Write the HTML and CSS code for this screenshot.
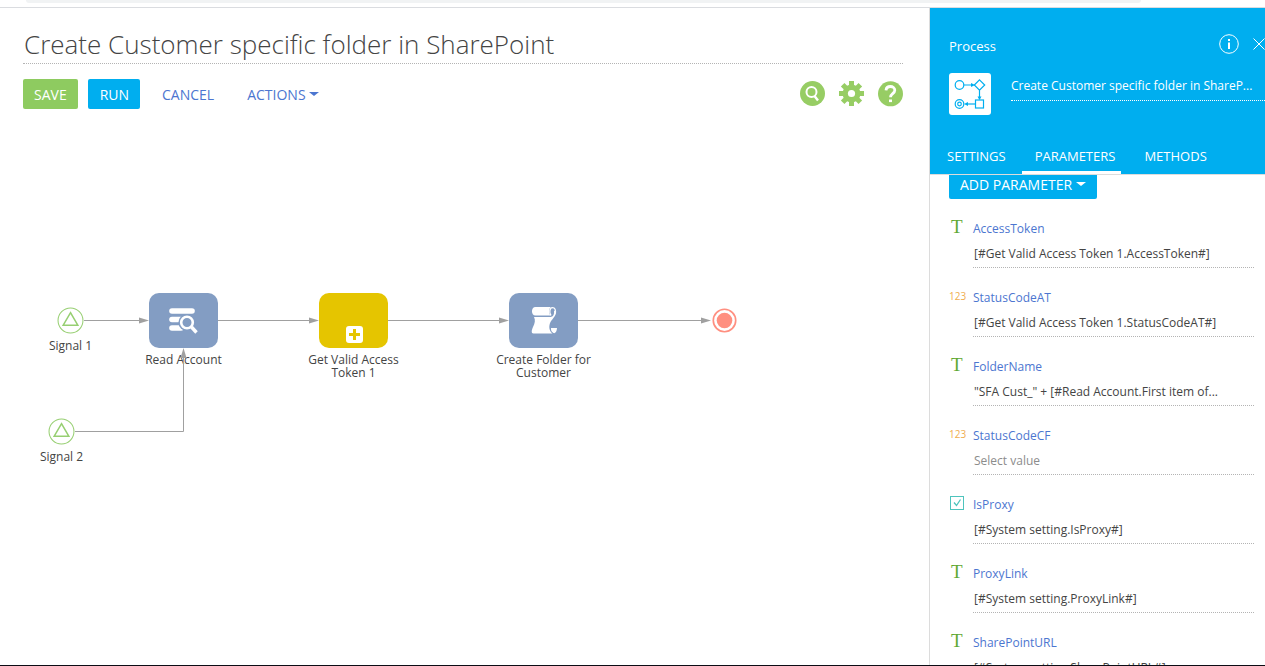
FILE: index.html
```html
<!DOCTYPE html>
<html lang="en">

<head>
    <meta charset="utf-8">
    <title>Process Designer</title>
    <link rel="stylesheet" href="styles.css">
</head>

<body>
    <div class="topbar">
        <div class="topbar-pill"></div>
    </div>
    <div class="page">
        <main class="designer">
            <header class="designer-header">
                <input class="title" type="text" aria-label="Process title" value="Create Customer specific folder in SharePoint">
                <div class="toolbar">
                    <button class="btn save">SAVE</button>
                    <button class="btn run">RUN</button>
                    <button class="btn flat">CANCEL</button>
                    <button class="btn flat actions">ACTIONS <span class="caret"></span></button>
                    <div class="tools">
                        <button class="icon-btn" aria-label="Search">
                            <svg width="26" height="26" viewBox="0 0 26 26">
                                <circle cx="13.5" cy="12.5" r="12.5" fill="#97cd64" />
                                <circle cx="12.5" cy="11" r="5" fill="none" stroke="#fff" stroke-width="2" />
                                <path d="M15.5 15L19 19.5" stroke="#fff" stroke-width="2.4" />
                            </svg>
                        </button>
                        <button class="icon-btn" aria-label="Settings">
                            <svg width="26" height="26" viewBox="-13.5 -12.5 26 26">
                                <g fill="#97cd64">
                                    <circle r="9" />
                                    <rect x="-2.5" y="-12.5" width="5" height="25" />
                                    <rect x="-12.5" y="-2.5" width="25" height="5" />
                                    <rect x="-2.5" y="-12.5" width="5" height="25" transform="rotate(45)" />
                                    <rect x="-2.5" y="-12.5" width="5" height="25" transform="rotate(-45)" />
                                </g>
                                <circle r="3.6" fill="#fff" />
                            </svg>
                        </button>
                        <button class="icon-btn" aria-label="Help">
                            <svg width="26" height="26" viewBox="0 0 26 26">
                                <circle cx="13.5" cy="12.8" r="12.5" fill="#97cd64" />
                                <path d="M9 9.3C9.2 6.7 11 5.5 13.4 5.5s4.4 1.4 4.4 3.7c0 3.3-4.3 3.5-4.3 7" fill="none" stroke="#fff" stroke-width="2.8" />
                                <rect x="12" y="18.5" width="3" height="2.6" fill="#fff" />
                            </svg>
                        </button>
                    </div>
                </div>
            </header>

            <div class="canvas">
                <div class="node signal-1">
                    <svg class="event" viewBox="0 0 26 26">
                        <circle cx="13" cy="13" r="12" />
                        <path class="tri" d="M13 5.5L20 17.5H6Z" />
                    </svg>
                    <span>Signal 1</span>
                </div>
                <div class="node signal-2">
                    <svg class="event" viewBox="0 0 26 26">
                        <circle cx="13" cy="13" r="12" />
                        <path class="tri" d="M13 5.5L20 17.5H6Z" />
                    </svg>
                    <span>Signal 2</span>
                </div>
                <div class="node read">
                    <div class="task">
                        <svg width="69" height="55" viewBox="0 0 69 55">
                            <g stroke="#fff" stroke-width="5.6" stroke-linecap="round">
                                <path d="M23 18H43" />
                                <path d="M23 26.5H32" />
                                <path d="M23 35H32" />
                            </g>
                            <circle cx="38" cy="29.5" r="8.6" fill="#839dc3" />
                            <circle cx="38" cy="29.5" r="5.8" fill="#839dc3" stroke="#fff" stroke-width="2.6" />
                            <path d="M42.5 34L47.5 39.5" stroke="#fff" stroke-width="3.4" />
                        </svg>
                    </div>
                    <span>Read Account</span>
                </div>
                <div class="node token">
                    <div class="task sub">
                        <svg width="69" height="55" viewBox="0 0 69 55">
                            <rect x="27" y="33" width="17" height="17" rx="3" fill="#fff" />
                            <path d="M35.5 36V47M30 41.5H41" stroke="#e5c500" stroke-width="3" />
                        </svg>
                    </div>
                    <span>Get Valid Access Token 1</span>
                </div>
                <div class="node folder">
                    <div class="task">
                        <svg width="69" height="55" viewBox="0 0 69 55">
                            <path fill="#fff" d="M26.5 14H42C39.5 16 39.5 20 41.5 22.5H26.5C21.8 22.5 21.8 14 26.5 14Z" />
                            <path fill="#fff" d="M25 24H41.5C44 24 45.5 21 45 18L47 17.5C48 22 44 25 41.5 29C39.5 33 40 38 43.5 40.5H24.5C22 40.5 22.5 37.5 24 34C26 30 26.5 27 25 24Z" />
                            <path fill="none" stroke="#fff" stroke-width="1.3" d="M42 22.5C40 20 40.5 14.6 43.5 14.6C46 14.6 47 17 46 20" />
                            <path fill="#fff" d="M42 35H48C48 38.5 46 40.8 44.5 40C42.5 39 41.8 37 42 35Z" />
                        </svg>
                    </div>
                    <span>Create Folder for Customer</span>
                </div>
                <div class="node end">
                    <svg class="event" viewBox="0 0 26 26">
                        <circle class="end-ring" cx="13" cy="13" r="10.8" />
                        <circle class="end-dot" cx="13" cy="13" r="7.5" />
                    </svg>
                </div>
                <svg class="flows" width="760" height="360" viewBox="0 0 760 360">
                    <g fill="none" stroke="#a0a0a0">
                        <path d="M84 211.5H142" />
                        <path d="M218 211.5H312" />
                        <path d="M388 211.5H502" />
                        <path d="M578 211.5H704" />
                        <path d="M75 322.5H183.5V247" />
                    </g>
                    <g fill="#a0a0a0">
                        <path d="M139 208.5L149 211.5L139 214.5Z" />
                        <path d="M309 208.5L319 211.5L309 214.5Z" />
                        <path d="M499 208.5L509 211.5L499 214.5Z" />
                        <path d="M701 208.5L711 211.5L701 214.5Z" />
                        <path d="M180.5 249L183.5 239L186.5 249Z" />
                    </g>
                </svg>
            </div>
        </main>

        <aside class="panel">
            <header class="panel-header">
                <div class="panel-top">
                    <span>Process</span>
                    <div class="panel-icons">
                        <button class="icon-btn" aria-label="Info">
                            <svg width="20" height="20" viewBox="0 0 20 20">
                                <circle cx="10" cy="10" r="9.3" fill="none" stroke="#fff" />
                                <path d="M10 5V7M10 8.5V15" stroke="#fff" stroke-width="2" />
                            </svg>
                        </button>
                        <button class="icon-btn" aria-label="Close">
                            <svg width="12" height="12" viewBox="0 0 12 12">
                                <path d="M0.5 0.5L11.5 11.5M11.5 0.5L0.5 11.5" stroke="#fff" />
                            </svg>
                        </button>
                    </div>
                </div>
                <div class="panel-name">
                    <svg class="process-icon" viewBox="0 0 42 42">
                        <rect width="42" height="42" rx="3" fill="#fff" />
                        <g fill="none" stroke="#00aeef" stroke-width="1.2">
                            <circle cx="10.5" cy="12" r="4.3" />
                            <path d="M15 12H24M30.5 6.8L35.7 12L30.5 17.2L25.3 12ZM30.5 17.5V26" />
                            <rect x="26.5" y="27" width="8" height="8" />
                            <circle cx="10.5" cy="31" r="4.3" />
                            <circle cx="10.5" cy="31" r="1.8" />
                            <path d="M26 31H17" />
                        </g>
                        <path fill="#00aeef" d="M22 10L26 12L22 14ZM28.5 23.5H32.5L30.5 27ZM19 29L15 31L19 33Z" />
                    </svg>
                    <input type="text" aria-label="Process name" value="Create Customer specific folder in ShareP...">
                </div>
                <nav class="tabs">
                    <button class="tab">SETTINGS</button>
                    <button class="tab active">PARAMETERS</button>
                    <button class="tab">METHODS</button>
                </nav>
            </header>
            <div class="panel-body">
                <button class="btn add">ADD PARAMETER <span class="caret"></span></button>
                <div class="param">
                    <span class="type text">T</span>
                    <label for="p1">AccessToken</label>
                    <input id="p1" type="text" value="[#Get Valid Access Token 1.AccessToken#]">
                </div>
                <div class="param">
                    <span class="type number">123</span>
                    <label for="p2">StatusCodeAT</label>
                    <input id="p2" type="text" value="[#Get Valid Access Token 1.StatusCodeAT#]">
                </div>
                <div class="param">
                    <span class="type text">T</span>
                    <label for="p3">FolderName</label>
                    <input id="p3" type="text" value="&quot;SFA Cust_&quot; + [#Read Account.First item of...">
                </div>
                <div class="param">
                    <span class="type number">123</span>
                    <label for="p4">StatusCodeCF</label>
                    <input id="p4" type="text" placeholder="Select value">
                </div>
                <div class="param">
                    <span class="type bool">
                        <svg width="14" height="14" viewBox="0 0 14 14" fill="none" stroke="#4ec4bd">
                            <rect x="0.5" y="0.5" width="13" height="13" />
                            <path d="M4 6.5L6.5 9.5L10.5 3.5" stroke-width="1.3" />
                        </svg>
                    </span>
                    <label for="p5">IsProxy</label>
                    <input id="p5" type="text" value="[#System setting.IsProxy#]">
                </div>
                <div class="param">
                    <span class="type text">T</span>
                    <label for="p6">ProxyLink</label>
                    <input id="p6" type="text" value="[#System setting.ProxyLink#]">
                </div>
                <div class="param">
                    <span class="type text">T</span>
                    <label for="p7">SharePointURL</label>
                    <input id="p7" type="text" value="[#System setting.SharePointURL#]">
                </div>
            </div>
        </aside>
    </div>
</body>

</html>
```

FILE: styles.css
```css
* {
    box-sizing: border-box;
}

body {
    margin: 0;
    height: 100vh;
    display: flex;
    flex-direction: column;
    overflow: hidden;
    border-bottom: 1px solid #0c0c14;
    font-family: "Open Sans", sans-serif;
    font-size: 12px;
    color: #444;
    background-color: #fff;
}

button,
input {
    font-family: inherit;
    font-size: inherit;
    color: inherit;
    border: none;
    background: none;
    padding: 0;
    margin: 0;
    border-radius: 0;
}

button {
    cursor: pointer;
}

svg {
    display: block;
}

.topbar {
    flex: none;
    height: 8px;
    padding: 0 124px 0 26px;
    border-bottom: 1px solid #dadce0;
}

.topbar-pill {
    height: 3px;
    background-color: #f1f3f4;
    border-radius: 0 0 12px 12px;
}

.page {
    flex: 1;
    min-height: 0;
    display: flex;
}

/* designer */
.designer {
    flex: 1;
    min-width: 0;
    display: flex;
    flex-direction: column;
}

.designer-header {
    padding: 16px 26px 0 23px;
}

.title {
    display: block;
    width: 100%;
    height: 40px;
    padding: 0 1px;
    font-size: 26px;
    font-weight: 300;
    border-bottom: 1px dotted #b4b4b4;
}

.toolbar {
    display: flex;
    align-items: center;
    margin-top: 15px;
}

.btn {
    height: 30px;
    padding: 0 11px;
    font-size: 14px;
    border-radius: 2px;
    white-space: nowrap;
}

.save {
    color: #fff;
    background-color: #8ecb60;
}

.run {
    margin-left: 10px;
    padding: 0 11px 0 12px;
    color: #fff;
    background-color: #00aeef;
}

.flat {
    margin-left: 11px;
    color: #4c76d0;
}

.caret {
    display: inline-block;
    vertical-align: middle;
    margin-bottom: 3px;
    border: 5px solid transparent;
    border-top: 4px solid currentColor;
    border-bottom: none;
}

.tools {
    display: flex;
    gap: 13px;
    margin-left: auto;
}

/* diagram */
.canvas {
    flex: 1;
    position: relative;
    overflow: hidden;
}

.node {
    position: absolute;
    width: 121px;
    display: flex;
    flex-direction: column;
    align-items: center;
    text-align: center;
    line-height: 13px;
}

.node span {
    max-width: 100px;
}

.signal-1 {
    left: 10px;
    top: 198px;
}

.signal-2 {
    left: 1px;
    top: 309px;
}

.read {
    left: 123px;
    top: 184px;
}

.token {
    left: 293px;
    top: 184px;
}

.folder {
    left: 483px;
    top: 184px;
}

.end {
    left: 664px;
    top: 198px;
}

.event {
    width: 27px;
    height: 27px;
    margin-bottom: 5px;
    fill: #fff;
    stroke: #97cf72;
}

.tri {
    stroke-width: 1.5;
}

.end-ring {
    stroke: #ff8f80;
    stroke-width: 1.6;
}

.end-dot {
    fill: #ff8f80;
    stroke: none;
}

.task {
    width: 69px;
    height: 55px;
    margin-bottom: 5px;
    border-radius: 10px;
    background-color: #839dc3;
}

.sub {
    background-color: #e5c500;
}

.flows {
    position: absolute;
    left: 0;
    top: 0;
}

/* right panel */
.panel {
    flex: none;
    width: 336px;
    display: flex;
    flex-direction: column;
    border-left: 1px solid #dcdcdc;
}

.panel-header {
    flex: none;
    padding-top: 26px;
    color: #fff;
    background-color: #00aeef;
    border-bottom: 1px solid #dcdcdc;
}

.panel-top {
    display: flex;
    justify-content: space-between;
    padding-left: 19px;
    font-size: 13px;
    line-height: 24px;
}

.panel-icons {
    display: flex;
    align-items: center;
    gap: 14px;
    height: 20px;
}

.panel-name {
    display: flex;
    align-items: flex-start;
    gap: 20px;
    margin-top: 15px;
    padding-left: 19px;
}

.process-icon {
    flex: none;
    width: 42px;
    height: 42px;
}

.panel-name input {
    flex: 1;
    min-width: 0;
    height: 28px;
    padding-bottom: 2px;
    border-bottom: 1px dotted #fff;
}

.tabs {
    display: flex;
    gap: 10px;
    margin-top: 25px;
    padding-left: 4px;
}

.tab {
    height: 34px;
    padding: 1px 6px 0 13px;
    font-size: 13px;
    border-bottom: 3px solid transparent;
}

.active {
    border-bottom-color: #fff;
}

.panel-body {
    flex: 1;
    min-height: 0;
    overflow: hidden;
    padding: 0 11px 0 19px;
}

.add {
    display: block;
    margin-top: -6px;
    color: #fff;
    background-color: #00aeef;
}

.param {
    display: grid;
    grid-template-columns: 24px 1fr;
    margin-top: 20px;
}

.type {
    display: flex;
    align-items: flex-start;
    padding-top: 1px;
    line-height: 14px;
}

.text {
    padding-left: 2px;
    font-family: "Liberation Serif", serif;
    font-size: 19px;
    color: #5fa832;
}

.number {
    font-size: 10px;
    color: #f0ad4e;
}

.bool {
    padding-left: 1px;
}

.param label {
    line-height: 20px;
    color: #4c76d0;
}

.param input {
    grid-column: 2;
    min-width: 0;
    height: 29px;
    padding: 0 1px;
    border-bottom: 1px dotted #b4b4b4;
}

.param input::placeholder {
    color: #8c8c8c;
    opacity: 1;
}
```
